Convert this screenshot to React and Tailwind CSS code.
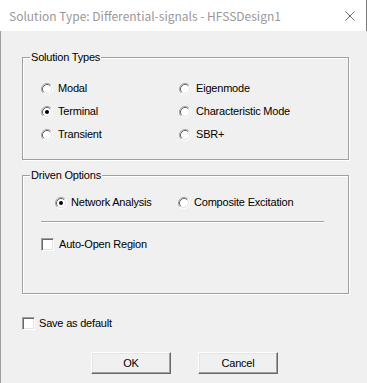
import React from 'react';

const Radio = ({ checked }) => (
  <svg width="12" height="12" viewBox="0 0 12 12" className="shrink-0">
    <circle cx="6" cy="6" r="4.5" fill="#fff" />
    <path d="M2.11 9.89A5.5 5.5 0 0 1 9.89 2.11" fill="none" stroke="#a0a0a0" strokeWidth="1" />
    <path d="M2.82 9.18A4.5 4.5 0 0 1 9.18 2.82" fill="none" stroke="#696969" strokeWidth="1" />
    <path d="M9.89 2.11A5.5 5.5 0 0 1 2.11 9.89" fill="none" stroke="#ffffff" strokeWidth="1" />
    <path d="M9.18 2.82A4.5 4.5 0 0 1 2.82 9.18" fill="none" stroke="#e3e3e3" strokeWidth="1" />
    {checked && <circle cx="6" cy="6" r="2" fill="#000" />}
  </svg>
);

const Check = () => (
  <div className="w-[13px] h-[13px] shrink-0 bg-white border border-t-[#a0a0a0] border-l-[#a0a0a0] border-b-white border-r-white shadow-[inset_1px_1px_0_#696969,inset_-1px_-1px_0_#e3e3e3]" />
);

const Option = ({ checked, label, gap = 'gap-[5px]', className = '' }) => (
  <div className={`flex items-center ${gap} ${className}`}>
    <Radio checked={checked} />
    <span>{label}</span>
  </div>
);

const Group = ({ title, className = '', children }) => (
  <div className={`relative border border-[#a0a0a0] shadow-[inset_1px_1px_0_#fff,1px_1px_0_#fff] ${className}`}>
    <span className="absolute left-[7px] -top-[7px] px-[1px] bg-[#f0f0f0] leading-[13px]">{title}</span>
    {children}
  </div>
);

const Button = ({ children }) => (
  <button className="w-[80px] h-[22px] bg-[#f0f0f0] border border-t-white border-l-white border-b-[#696969] border-r-[#696969] shadow-[inset_-1px_-1px_0_#a0a0a0,inset_1px_1px_0_#e3e3e3] leading-none">
    {children}
  </button>
);

export default function App() {
  return (
    <div className="w-[367px] h-[383px] flex flex-col font-['Liberation_Sans',Arial,sans-serif] text-[11px] tracking-[-0.2px] text-black">
      {/* Title bar */}
      <div className="h-[31px] bg-white flex items-center justify-between pl-[9px] pr-[11px] border-r border-[#7a7a7a]">
        <span className="font-['Noto_Sans_CJK_SC','Noto_Sans',sans-serif] text-[12px] tracking-normal text-[#999999]">
          Solution Type: Differential-signals - HFSSDesign1
        </span>
        <svg width="10" height="10" viewBox="0 0 10 10">
          <path d="M0.5 0.5L9.5 9.5M9.5 0.5L0.5 9.5" stroke="#6b6b6b" strokeWidth="1" />
        </svg>
      </div>

      {/* Body */}
      <div className="flex-1 bg-[#f0f0f0] border-l border-[#a0a0a0] pl-[21px] pr-[18px] pt-[26px]">
        <Group title="Solution Types" className="h-[103px]">
          <div className="grid grid-cols-[138px_1fr] auto-rows-[23px] pt-[19px] pl-[18px]">
            <Option label="Modal" />
            <Option label="Eigenmode" />
            <Option checked label="Terminal" />
            <Option label="Characteristic Mode" />
            <Option label="Transient" />
            <Option label="SBR+" />
          </div>
        </Group>

        <Group title="Driven Options" className="h-[119px] mt-[15px]">
          <div className="pt-[15px] pl-[32px] flex h-[38px] items-center">
            <Option checked label="Network Analysis" gap="gap-[4px]" className="w-[123px]" />
            <Option label="Composite Excitation" gap="gap-[4px]" />
          </div>
          <div className="ml-[18px] mt-[7px] w-[283px] h-[2px] border-t border-[#a0a0a0] border-b border-b-white" />
          <div className="ml-[18px] mt-[14px] h-[15px] flex items-center gap-[5px]">
            <Check />
            <span>Auto-Open Region</span>
          </div>
        </Group>

        <div className="mt-[22px] h-[15px] flex items-center gap-[4px]">
          <Check />
          <span>Save as default</span>
        </div>

        <div className="mt-[21px] flex justify-center gap-[27px] pr-[2px]">
          <Button>OK</Button>
          <Button>Cancel</Button>
        </div>
      </div>
    </div>
  );
}
